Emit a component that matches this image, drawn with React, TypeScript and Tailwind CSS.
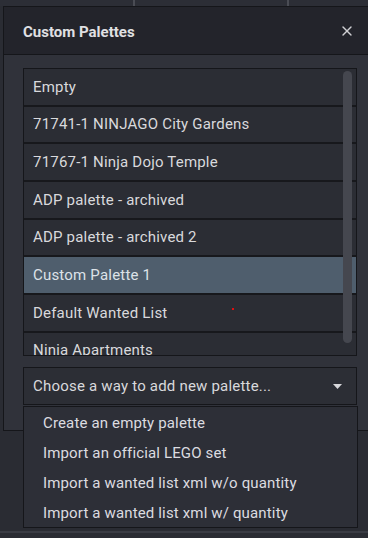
import { X } from "lucide-react";

const palettes = [
  "Empty",
  "71741-1 NINJAGO City Gardens",
  "71767-1 Ninja Dojo Temple",
  "ADP palette - archived",
  "ADP palette - archived 2",
  "Custom Palette 1",
  "Default Wanted List",
  "Ninja Apartments",
];

const options = [
  "Create an empty palette",
  "Import an official LEGO set",
  "Import a wanted list xml w/o quantity",
  "Import a wanted list xml w/ quantity",
];

export default function App() {
  const selected = "Custom Palette 1";

  return (
    <div
      className="relative w-[368px] h-[538px] overflow-hidden bg-[#2a2c33] text-[#d9d9dc]"
      style={{ fontFamily: "Roboto, 'Noto Sans', sans-serif" }}
    >
      {/* page behind the dialog */}
      <div className="flex h-[6px] bg-[#2c2e36]">
        <div className="w-[135px] border-r-2 border-[#4a4c54]" />
        <div className="w-[154px] border-r-2 border-[#4a4c54]" />
      </div>

      {/* Dialog */}
      <div className="ml-[3px] h-[425px] flex flex-col border-l border-t border-b border-[#15161a] bg-[#30323a]">
        {/* Header */}
        <div className="h-[48px] shrink-0 flex items-center justify-between pl-[19px] pr-[13px] bg-[#23242b] border-b border-[#15161a]">
          <h2 className="mt-[3px] text-[15px] font-bold text-[#e0e0e3]">Custom Palettes</h2>
          <X className="w-[16px] h-[16px] text-[#d0d0d4]" strokeWidth={2} />
        </div>

        {/* Body */}
        <div className="flex-1 flex flex-col pt-[13px] pl-[19px] pr-[11px]">
          <div className="relative h-[288px] overflow-hidden border border-[#15161a] bg-[#2b2d34]">
            {palettes.map((name) => (
              <div
                key={name}
                className={`h-[37.67px] flex items-center pl-[9px] border-b-2 border-[#17181c] text-[15px] tracking-[0.2px] ${
                  name === selected ? "bg-[#4f5e6d] text-[#dde2e8]" : "bg-[#2b2d34]"
                }`}
              >
                {name}
              </div>
            ))}
            <div className="absolute left-[319px] top-[2px] w-[9px] h-[272px] rounded-full bg-[#45474f]" />
            {/* stray red dot */}
            <div className="absolute left-[208px] top-[239px] w-[2px] h-[2px] bg-[#e01010]" />
          </div>

          {/* Select */}
          <div className="mt-[11px] h-[38px] flex items-center justify-between pl-[9px] pr-[14px] border border-[#15161a] bg-[#2c2e35] text-[15px] tracking-[0.2px]">
            <span>Choose a way to add new palette...</span>
            <svg width="9" height="5" viewBox="0 0 9 5">
              <path d="M0 0 L9 0 L4.5 5 Z" fill="#d8d8dc" />
            </svg>
          </div>
        </div>
      </div>

      {/* bottom page line */}
      <div className="mt-[100px] h-[2px] bg-[#3a3c44]" />

      {/* Dropdown menu */}
      <div className="absolute left-[23px] top-[406px] w-[335px] h-[122px] bg-[#2d2f37] border border-[#15161a] pt-[1px]">
        {options.map((o) => (
          <div key={o} className="h-[30px] flex items-center pl-[19px] text-[15px] tracking-[0.15px] text-[#dcdce0]">
            {o}
          </div>
        ))}
      </div>
    </div>
  );
}
